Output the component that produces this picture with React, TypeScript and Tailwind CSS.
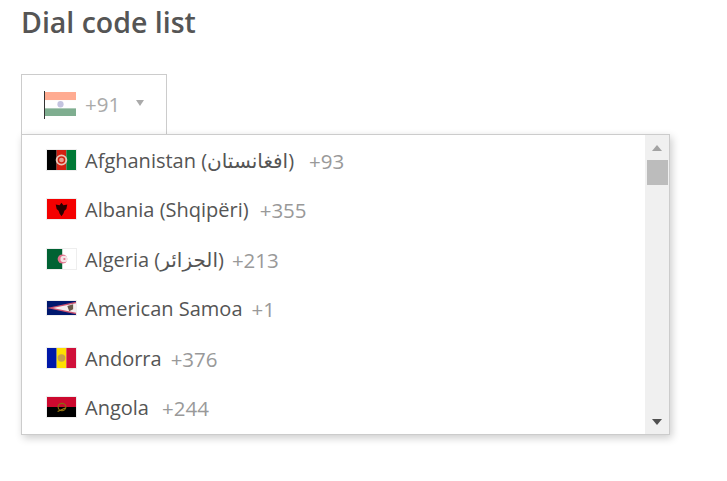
import React from "react";

const Flag = ({ children, className = "h-[22px]" }: { children: React.ReactNode; className?: string }) => (
    <svg viewBox="0 0 30 22" className={`w-[31px] shrink-0 mb-[2px] blur-[0.4px] ${className}`} preserveAspectRatio="none">
        {children}
    </svg>
);

const countries = [
    {
        name: "Afghanistan (افغانستان)",
        code: "+93",
        gap: "ml-[15px]",
        flag: (
            <>
                <rect width="10" height="22" fill="#000" />
                <rect x="10" width="10" height="22" fill="#d32011" />
                <rect x="20" width="10" height="22" fill="#007a36" />
                <circle cx="15" cy="11" r="5" fill="none" stroke="#e8c8b8" strokeWidth="2" />
                <circle cx="15" cy="11" r="2.5" fill="#e8a090" />
            </>
        ),
    },
    {
        name: "Albania (Shqipëri)",
        code: "+355",
        gap: "ml-[11px]",
        flag: (
            <>
                <rect width="30" height="22" fill="#f40000" />
                <path d="M9 6l4 1 2-3 2 3 4-1-1 5-2 2-1 3-2 3-2-3-1-3-2-2z" fill="#2a0000" />
            </>
        ),
    },
    {
        name: "Algeria (الجزائر)",
        code: "+213",
        gap: "ml-[8px]",
        flag: (
            <>
                <rect width="16" height="22" fill="#006233" />
                <rect x="16" width="14" height="22" fill="#fff" />
                <circle cx="16" cy="11" r="5" fill="#e0708a" />
                <circle cx="17.5" cy="11" r="3.6" fill="#f4e4e6" />
                <circle cx="18" cy="11" r="1.2" fill="#e0708a" />
            </>
        ),
    },
    {
        name: "American Samoa",
        code: "+1",
        gap: "ml-[9px]",
        h: "h-[16px]",
        flag: (
            <>
                <rect width="30" height="22" fill="#00186e" />
                <path d="M30 1L0 11l30 10z" fill="#c8506e" />
                <path d="M30 3.5L6 11l24 7.5z" fill="#f4eeee" />
                <path d="M21 8l6-3v8l-4 3z" fill="#6a5a4a" />
            </>
        ),
    },
    {
        name: "Andorra",
        code: "+376",
        gap: "ml-[9px]",
        flag: (
            <>
                <rect width="10" height="22" fill="#0018a8" />
                <rect x="10" width="10" height="22" fill="#fedf00" />
                <rect x="20" width="10" height="22" fill="#d0103a" />
                <circle cx="15" cy="11" r="4" fill="#c7a04a" />
            </>
        ),
    },
    {
        name: "Angola",
        code: "+244",
        gap: "ml-[13px]",
        flag: (
            <>
                <rect width="30" height="11" fill="#cc092f" />
                <rect y="11" width="30" height="11" fill="#000" />
                <circle cx="15.5" cy="11" r="4" fill="none" stroke="#8a6a10" strokeWidth="1.2" />
                <path d="M11 16l8-4" stroke="#a08010" strokeWidth="1.2" />
            </>
        ),
    },
];

export default function App() {
    return (
        <div className="w-[727px] h-[481px] bg-white overflow-hidden font-['Open_Sans','DejaVu_Sans',sans-serif] text-[#555]">
            <h1 className="pl-[21px] pt-[3px] text-[28.5px] leading-[38px] font-semibold">Dial code list</h1>

            <div className="ml-[21px] mt-[33px] w-[649px]">
                <div className="w-[146px] h-[61px] border border-[#ccc] flex items-center pl-[22px]">
                    <div className="w-px h-[28px] bg-[#333]" />
                    <div className="flex">
                        <Flag className="h-[24px]">
                            <rect width="30" height="7.5" fill="#ffab91" />
                            <rect y="7.5" width="30" height="7.5" fill="#fff" />
                            <rect y="15" width="30" height="7" fill="#7fae90" />
                            <circle cx="15" cy="11.2" r="3" fill="#c4c4e0" />
                        </Flag>
                    </div>
                    <span className="ml-[9px] text-[20.5px] text-[#aaa]">+91</span>
                    <span className="ml-[16px] mb-[3px] w-0 h-0 border-x-[4px] border-x-transparent border-t-[6px] border-t-[#aaa]" />
                </div>

                <div className="h-[301px] -mt-px border border-[#ccc] bg-white shadow-[2px_3px_8px_rgba(0,0,0,0.2)] flex">
                    <ul className="flex-1 pl-[24px] pt-[1px]">
                        {countries.map((c) => (
                            <li key={c.code} className="h-[49.5px] flex items-center">
                                <Flag className={`border border-[#eee] ${c.h ?? "h-[22px]"}`}>{c.flag}</Flag>
                                <span className="ml-[8px] text-[20px] leading-none text-[#555]">{c.name}</span>
                                <span className={`${c.gap} text-[20.5px] leading-none text-[#999]`}>{c.code}</span>
                            </li>
                        ))}
                    </ul>
                    <div className="w-[24px] bg-[#f0f0f0] flex flex-col items-center">
                        <span className="mt-[10px] w-0 h-0 border-x-[5px] border-x-transparent border-b-[6px] border-b-[#a3a3a3]" />
                        <div className="mt-[9px] w-[21px] h-[25px] bg-[#bcbcbc]" />
                        <span className="mt-auto mb-[9px] w-0 h-0 border-x-[5px] border-x-transparent border-t-[6px] border-t-[#505050]" />
                    </div>
                </div>
            </div>
        </div>
    );
}
